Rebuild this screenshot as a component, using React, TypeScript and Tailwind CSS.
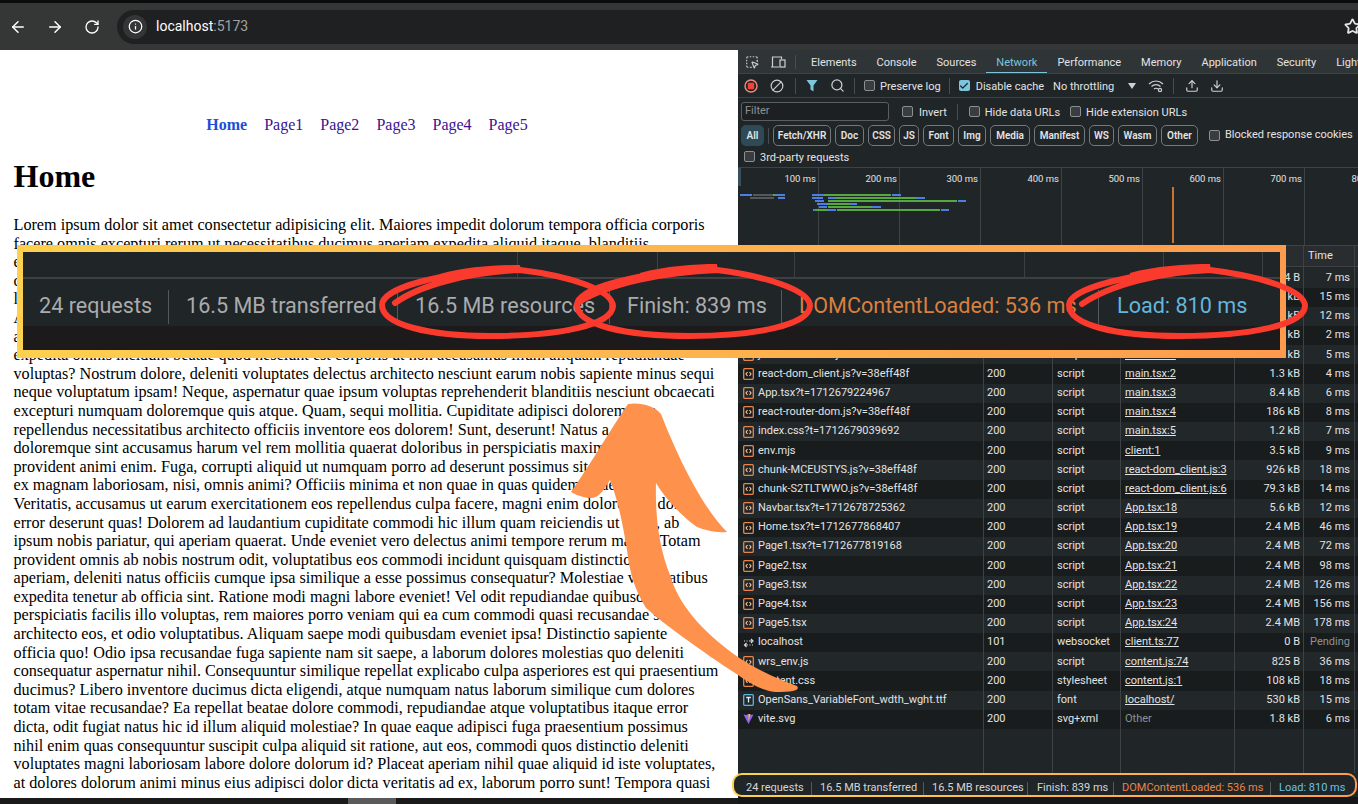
import { ArrowLeft, ArrowRight, RotateCw, Info, Star, Ban, Search, Upload, Download, Check, SquareDashedMousePointer } from 'lucide-react';

const lines = [
  'Lorem ipsum dolor sit amet consectetur adipisicing elit. Maiores impedit dolorum tempora officia corporis',
  'facere omnis excepturi rerum ut necessitatibus ducimus aperiam expedita aliquid itaque, blanditiis',
  'eveniet quibusdam nemo dolorum accusantium tempore laudantium consequatur sed ratione quia',
  'consectetur placeat dignissimos eaque vitae nostrum rerum soluta fugit harum magnam tenetur',
  'libero quas reprehenderit molestias dicta illum corrupti ipsam error ullam officia animi minima',
  'Assumenda voluptatem iure sapiente obcaecati facilis dolor ipsum debitis aperiam natus quod',
  'atque dolores maiores neque provident quisquam veritatis ducimus nisi esse repellat porro',
  'expedita omnis incidunt beatae quod nesciunt est corporis ut non accusamus illum aliquam repudiandae',
  'voluptas? Nostrum dolore, deleniti voluptates delectus architecto nesciunt earum nobis sapiente minus sequi',
  'neque voluptatum ipsam! Neque, aspernatur quae ipsum voluptas reprehenderit blanditiis nesciunt obcaecati',
  'excepturi numquam doloremque quis atque. Quam, sequi mollitia. Cupiditate adipisci dolorem ipsa',
  'repellendus necessitatibus architecto officiis inventore eos dolorem! Sunt, deserunt! Natus a quia',
  'doloremque sint accusamus harum vel rem mollitia quaerat doloribus in perspiciatis maxime nemo',
  'provident animi enim. Fuga, corrupti aliquid ut numquam porro ad deserunt possimus sit dolor amet',
  'ex magnam laboriosam, nisi, omnis animi? Officiis minima et non quae in quas quidem vitae atque',
  'Veritatis, accusamus ut earum exercitationem eos repellendus culpa facere, magni enim dolorem id dolor',
  'error deserunt quas! Dolorem ad laudantium cupiditate commodi hic illum quam reiciendis ut nulla, ab',
  'ipsum nobis pariatur, qui aperiam quaerat. Unde eveniet vero delectus animi tempore rerum magni. Totam',
  'provident omnis ab nobis nostrum odit, voluptatibus eos commodi incidunt quisquam distinctio nam',
  'aperiam, deleniti natus officiis cumque ipsa similique a esse possimus consequatur? Molestiae voluptatibus',
  'expedita tenetur ab officia sint. Ratione modi magni labore eveniet! Vel odit repudiandae quibusdam',
  'perspiciatis facilis illo voluptas, rem maiores porro veniam qui ea cum commodi quasi recusandae sit',
  'architecto eos, et odio voluptatibus. Aliquam saepe modi quibusdam eveniet ipsa! Distinctio sapiente',
  'officia quo! Odio ipsa recusandae fuga sapiente nam sit saepe, a laborum dolores molestias quo deleniti',
  'consequatur aspernatur nihil. Consequuntur similique repellat explicabo culpa asperiores est qui praesentium',
  'ducimus? Libero inventore ducimus dicta eligendi, atque numquam natus laborum similique cum dolores',
  'totam vitae recusandae? Ea repellat beatae dolore commodi, repudiandae atque voluptatibus itaque error',
  'dicta, odit fugiat natus hic id illum aliquid molestiae? In quae eaque adipisci fuga praesentium possimus',
  'nihil enim quas consequuntur suscipit culpa aliquid sit ratione, aut eos, commodi quos distinctio deleniti',
  'voluptates magni laboriosam labore dolore dolorum id? Placeat aperiam nihil quae aliquid id iste voluptates,',
  'at dolores dolorum animi minus eius adipisci dolor dicta veritatis ad ex, laborum porro sunt! Tempora quasi',
];

type Row = { name: string; status: string; type: string; init: string; size: string; time: string; kind?: string };

const rows: Row[] = [
  { name: 'localhost', status: '200', type: 'document', init: 'Other', size: '1.4 B', time: '7 ms', kind: 'doc' },
  { name: 'main.tsx', status: '200', type: 'script', init: 'localhost/:13', size: '2.1 kB', time: '15 ms' },
  { name: 'client', status: '200', type: 'script', init: 'localhost/:4', size: '170 kB', time: '12 ms' },
  { name: '@react-refresh', status: '200', type: 'script', init: 'localhost/:3', size: '104 kB', time: '2 ms' },
  { name: 'jsx-dev-runtime.js?v=38eff48f', status: '200', type: 'script', init: 'main.tsx:1', size: '1.1 kB', time: '5 ms' },
  { name: 'react-dom_client.js?v=38eff48f', status: '200', type: 'script', init: 'main.tsx:2', size: '1.3 kB', time: '4 ms' },
  { name: 'App.tsx?t=1712679224967', status: '200', type: 'script', init: 'main.tsx:3', size: '8.4 kB', time: '6 ms' },
  { name: 'react-router-dom.js?v=38eff48f', status: '200', type: 'script', init: 'main.tsx:4', size: '186 kB', time: '8 ms' },
  { name: 'index.css?t=1712679039692', status: '200', type: 'script', init: 'main.tsx:5', size: '1.2 kB', time: '7 ms' },
  { name: 'env.mjs', status: '200', type: 'script', init: 'client:1', size: '3.5 kB', time: '9 ms' },
  { name: 'chunk-MCEUSTYS.js?v=38eff48f', status: '200', type: 'script', init: 'react-dom_client.js:3', size: '926 kB', time: '18 ms' },
  { name: 'chunk-S2TLTWWO.js?v=38eff48f', status: '200', type: 'script', init: 'react-dom_client.js:6', size: '79.3 kB', time: '14 ms' },
  { name: 'Navbar.tsx?t=1712678725362', status: '200', type: 'script', init: 'App.tsx:18', size: '5.6 kB', time: '12 ms' },
  { name: 'Home.tsx?t=1712677868407', status: '200', type: 'script', init: 'App.tsx:19', size: '2.4 MB', time: '46 ms' },
  { name: 'Page1.tsx?t=1712677819168', status: '200', type: 'script', init: 'App.tsx:20', size: '2.4 MB', time: '72 ms' },
  { name: 'Page2.tsx', status: '200', type: 'script', init: 'App.tsx:21', size: '2.4 MB', time: '98 ms' },
  { name: 'Page3.tsx', status: '200', type: 'script', init: 'App.tsx:22', size: '2.4 MB', time: '126 ms' },
  { name: 'Page4.tsx', status: '200', type: 'script', init: 'App.tsx:23', size: '2.4 MB', time: '156 ms' },
  { name: 'Page5.tsx', status: '200', type: 'script', init: 'App.tsx:24', size: '2.4 MB', time: '178 ms' },
  { name: 'localhost', status: '101', type: 'websocket', init: 'client.ts:77', size: '0 B', time: 'Pending', kind: 'ws' },
  { name: 'wrs_env.js', status: '200', type: 'script', init: 'content.js:74', size: '825 B', time: '36 ms' },
  { name: 'content.css', status: '200', type: 'stylesheet', init: 'content.js:1', size: '108 kB', time: '18 ms' },
  { name: 'OpenSans_VariableFont_wdth_wght.ttf', status: '200', type: 'font', init: 'localhost/', size: '530 kB', time: '15 ms', kind: 'font' },
  { name: 'vite.svg', status: '200', type: 'svg+xml', init: 'Other', size: '1.8 kB', time: '6 ms', kind: 'vite' },
];

const tabs = ['Elements', 'Console', 'Sources', 'Network', 'Performance', 'Memory', 'Application', 'Security', 'Lighthouse'];
const pills = [
  { label: 'Fetch/XHR', cls: 'w-[58px]' },
  { label: 'Doc', cls: 'w-[29px]' },
  { label: 'CSS', cls: 'w-[27px]' },
  { label: 'JS', cls: 'w-[20px]' },
  { label: 'Font', cls: 'w-[31px]' },
  { label: 'Img', cls: 'w-[28px]' },
  { label: 'Media', cls: 'w-[40px]' },
  { label: 'Manifest', cls: 'w-[51px]' },
  { label: 'WS', cls: 'w-[25px]' },
  { label: 'Wasm', cls: 'w-[39px]' },
  { label: 'Other', cls: 'w-[37px]' },
];
const ticks = ['100 ms', '200 ms', '300 ms', '400 ms', '500 ms', '600 ms', '700 ms', '800 ms'];

function RowIcon({ kind }: { kind?: string }) {
  if (kind === 'ws')
    return (
      <svg width="11" height="12" viewBox="0 0 11 12" fill="none" stroke="#d8d8d8" strokeWidth="1.2">
        <path d="M1 4h1M3.500 4h1M6 4h3M8 2l2 2-2 2" />
        <path d="M10 8H9M7.500 8h-1M5 8H2M3.500 6 1.500 8l2 2" />
      </svg>
    );
  if (kind === 'font')
    return (
      <svg width="11" height="12" viewBox="0 0 11 12">
        <rect x="0.7" y="0.7" width="9.6" height="10.6" rx="1" fill="none" stroke="#5fb4e0" strokeWidth="1.3" />
        <path d="M3.2 3.500h4.600M5.500 3.500v5" stroke="#d9eef8" strokeWidth="1.3" fill="none" />
      </svg>
    );
  if (kind === 'vite')
    return (
      <svg width="11" height="12" viewBox="0 0 11 12">
        <path d="M0.5 1.5 L5.5 11 L10.5 1.5 L7.5 2 L5.5 1 L3.5 2 Z" fill="#8f63f5" />
        <path d="M5.5 1 L7.5 1 L5.5 8 Z" fill="#fcc72b" />
      </svg>
    );
  return (
    <svg width="11" height="12" viewBox="0 0 11 12">
      <rect x="0.7" y="0.7" width="9.6" height="10.6" rx="1" fill="none" stroke="#e8864a" strokeWidth="1.3" />
      <path d="M4.500 4L3 6l1.500 2M6.500 4L8 6 6.500 8" stroke="#f3cdb0" strokeWidth="1.1" fill="none" />
    </svg>
  );
}

function Box({ checked }: { checked?: boolean }) {
  return checked ? (
    <span className="flex h-[11px] w-[11px] items-center justify-center rounded-[2px] bg-[#7cc5dc]">
      <Check size={10} strokeWidth={3} className="text-[#1f2427]" />
    </span>
  ) : (
    <span className="block h-[11px] w-[11px] rounded-[2px] border border-[#8b8f92] bg-[#3a3d40]" />
  );
}

function Sep() {
  return <span className="block h-[16px] w-px bg-[#4a4d50]" />;
}

function Annotation() {
  return (
    <svg className="pointer-events-none absolute left-0 top-0 z-30" width="1358" height="804" viewBox="0 0 1358 804">
      <path
        d="M395 303C420 285 470 272 520 270C570 276 612 290 613 306C612 325 560 336 490 336C430 336 382 325 382 305C382 288 440 272 515 269"
        fill="none"
        stroke="#fb3a2e"
        strokeWidth="6"
        strokeLinecap="round"
      />
      <path d="M440 274C465 267 495 265 520 265L521 272C490 273 465 275 440 279Z" fill="#fb3a2e" />
      <path
        d="M579 302C610 283 665 272 717 270C765 276 810 290 810 306C809 325 755 336 690 336C625 336 577 325 577 305C577 288 640 272 712 269"
        fill="none"
        stroke="#fb3a2e"
        strokeWidth="6"
        strokeLinecap="round"
      />
      <path d="M640 273C665 266 695 264 717 264L718 272C690 273 665 275 640 278Z" fill="#fb3a2e" />
      <path
        d="M1082 304C1110 285 1160 272 1210 270C1260 276 1305 290 1305 306C1304 325 1250 336 1180 336C1115 336 1069 325 1069 305C1069 288 1135 272 1205 269"
        fill="none"
        stroke="#fb3a2e"
        strokeWidth="6"
        strokeLinecap="round"
      />
      <path d="M1130 273C1155 266 1185 264 1210 264L1211 272C1185 273 1155 275 1130 278Z" fill="#fb3a2e" />
      <path
        d="M628 404C640 402 655 406 661 414C675 450 700 505 727 532C715 533 705 530 697 527C680 515 665 498 656 483C655 520 660 550 670 575C680 610 710 637 738 657C755 669 780 680 797 686C800 690 795 692 775 692C760 690 748 682 738 675C700 650 665 625 646 608C635 590 630 575 627 550C623 525 618 500 610 480C605 488 600 497 592 498C585 498 578 496 571 492C590 465 610 430 628 404Z"
        fill="#fe914c"
      />
    </svg>
  );
}

export default function App() {
  return (
    <div className="relative h-[804px] w-[1358px] overflow-hidden bg-[#1f2124] font-['Roboto',sans-serif]">
      {/* chrome bar */}
      <div className="h-[50px] bg-[#353636]">
        <div className="h-[3px] bg-[#0b0b0b]" />
        <div className="flex h-[47px] items-center">
          <ArrowLeft size={18} className="ml-[9px] text-white" />
          <ArrowRight size={18} className="ml-[19px] text-white" />
          <RotateCw size={16} className="ml-[20px] text-white" />
          <div className="ml-[17px] flex h-[34px] flex-1 items-center rounded-l-full bg-[#1f2022] pl-[6px]">
            <span className="flex h-[24px] w-[24px] items-center justify-center rounded-full bg-[#333537]">
              <Info size={15} className="text-white" />
            </span>
            <span className="ml-[9px] text-[14px] text-white">
              localhost<span className="text-[#a0a2a5]">:5173</span>
            </span>
            <Star size={17} strokeWidth={2.5} className="ml-auto mr-[-3px] text-[#e3e3e3]" />
          </div>
        </div>
      </div>

      <div className="flex h-[754px]">
        {/* page */}
        <div className="w-[738px] shrink-0 bg-white font-['Liberation_Serif',serif] text-black">
          <div className="h-[748px] overflow-hidden">
            <nav className="flex justify-center gap-[17px] pr-[4px] pt-[65px] text-[16px] leading-[20px]">
              <a className="font-bold text-[#1d4fd8]">Home</a>
              {['Page1', 'Page2', 'Page3', 'Page4', 'Page5'].map((p) => (
                <a key={p} className="text-[#3b1290]">
                  {p}
                </a>
              ))}
            </nav>
            <h1 className="mt-[21px] pl-[13.5px] text-[32px] font-bold leading-[40px]">Home</h1>
            <div className="mt-[20px] pl-[13.5px] text-[16.2px] leading-[18.6px]">
              {lines.map((l, i) => (
                <div key={i} className="whitespace-nowrap">
                  {l}
                </div>
              ))}
            </div>
          </div>
          <div className="flex h-[6px] bg-[#1a1a1a] pl-[348px]">
            <div className="h-full w-[48px] bg-[#5a5a5a]" />
          </div>
        </div>

        {/* devtools */}
        <div className="flex w-[620px] shrink-0 flex-col bg-[#202528] text-[11px] text-[#e3e3e3]">
          <div className="flex h-[24px] items-center overflow-hidden border-b border-[#3f4245] bg-[#2f3437]">
            <SquareDashedMousePointer size={14} className="ml-[7px] shrink-0 text-[#d0d0d0]" />
            <svg className="ml-[11px] shrink-0" width="16" height="14" viewBox="0 0 16 14" fill="none" stroke="#d0d0d0" strokeWidth="1.2">
              <path d="M1 12h8M2.500 12V2h9v2" />
              <rect x="10" y="5" width="5" height="7" />
            </svg>
            <span className="ml-[9px] h-[14px] w-px shrink-0 bg-[#4a4d50]" />
            <div className="ml-[5px] flex">
              {tabs.map((t) => (
                <span
                  key={t}
                  className={
                    t === 'Network'
                      ? 'flex h-[24px] items-center whitespace-nowrap border-b-2 border-[#7cc5dc] px-[10px] pt-[5px] text-[#7cc5dc]'
                      : 'flex h-[24px] items-center whitespace-nowrap px-[10px] pt-[3px]'
                  }
                >
                  {t}
                </span>
              ))}
            </div>
          </div>

          <div className="flex h-[24px] items-center border-b border-[#3f4245]">
            <svg className="ml-[6px]" width="14" height="14" viewBox="0 0 14 14">
              <circle cx="7" cy="7" r="6" fill="none" stroke="#f28b82" strokeWidth="1.4" />
              <rect x="3.800" y="3.800" width="6.400" height="6.400" rx="1.200" fill="#f44336" />
            </svg>
            <Ban size={14} className="ml-[12px] -scale-x-100 text-[#d0d0d0]" />
            <span className="ml-[11px]"><Sep /></span>
            <svg className="ml-[10px]" width="12" height="13" viewBox="0 0 12 13">
              <path d="M0.5 1h11L7.500 6.500V12.500L4.500 10.500V6.500Z" fill="#7cc5dc" />
            </svg>
            <Search size={15} className="ml-[12px] text-[#d0d0d0]" />
            <span className="ml-[9px]"><Sep /></span>
            <span className="ml-[9px]"><Box /></span>
            <span className="ml-[5px] pt-[3px]">Preserve log</span>
            <span className="ml-[8px]"><Sep /></span>
            <span className="ml-[9px]"><Box checked /></span>
            <span className="ml-[6px] pt-[3px]">Disable cache</span>
            <span className="ml-[9px] pt-[3px]">No throttling</span>
            <svg className="ml-[14px]" width="8" height="6" viewBox="0 0 8 6"><path d="M0 0h8L4 6Z" fill="#d0d0d0" /></svg>
            <svg className="ml-[12px]" width="16" height="14" viewBox="0 0 16 14" fill="none" stroke="#d0d0d0" strokeWidth="1.2">
              <path d="M1 5c4-4 10-4 14 0M3.500 7.500c2.500-2.500 6.500-2.500 9 0M6 10c1-1 3-1 4 0" />
              <circle cx="12" cy="11" r="1.600" />
            </svg>
            <span className="ml-[9px]"><Sep /></span>
            <Upload size={14} className="ml-[11px] text-[#d0d0d0]" />
            <Download size={14} className="ml-[11px] text-[#d0d0d0]" />
          </div>

          <div className="flex h-[27px] items-center pl-[3px]">
            <span className="flex h-[19px] w-[148px] items-center rounded-[3px] border border-[#5b5e61] bg-[#1d2023] pl-[3px] text-[#8e9194]">Filter</span>
            <span className="ml-[13px]"><Box /></span>
            <span className="ml-[6px] pt-[3px]">Invert</span>
            <span className="ml-[10px]"><Sep /></span>
            <span className="ml-[11px]"><Box /></span>
            <span className="ml-[5px] pt-[3px]">Hide data URLs</span>
            <span className="ml-[10px]"><Box /></span>
            <span className="ml-[5px] pt-[3px]">Hide extension URLs</span>
          </div>

          <div className="flex h-[21px] items-center pl-[3px] text-[10px] font-semibold">
            <span className="flex h-[21px] w-[23px] items-center justify-center rounded-[5px] bg-[#2e4a57]">All</span>
            <span className="ml-[4px] h-[16px] w-px bg-[#4a4d50]" />
            <div className="ml-[4px] flex gap-[4px]">
              {pills.map((p) => (
                <span key={p.label} className={`flex h-[21px] items-center justify-center whitespace-nowrap rounded-[5px] border border-[#74787b] ${p.cls}`}>
                  {p.label}
                </span>
              ))}
            </div>
            <span className="ml-[11px]"><Box /></span>
            <span className="ml-[5px] whitespace-nowrap text-[11px] font-normal">Blocked response cookies</span>
          </div>

          <div className="flex h-[22px] items-center border-b border-[#3f4245] pl-[6px]">
            <Box />
            <span className="ml-[5px] pt-[3px]">3rd-party requests</span>
          </div>

          {/* overview */}
          <div className="relative flex h-[78px] border-b border-[#3f4245]">
            {ticks.map((t) => (
              <div key={t} className="flex h-full w-[81px] shrink-0 justify-end border-r border-[#3f4245] pr-[2px] pt-[4px] text-[9.5px] leading-[14px]">
                {t}
              </div>
            ))}
            <svg className="absolute left-0 top-0" width="620" height="76" viewBox="0 0 620 76">
              <g fill="#4d7fe0">
                <rect x="2" y="26" width="12" height="2" /><rect x="37" y="26" width="10" height="2" />
                <rect x="40" y="29" width="7" height="2" /><rect x="74" y="26" width="12" height="2" />
                <rect x="154" y="26" width="9" height="2" /><rect x="74" y="29" width="11" height="2" />
                <rect x="90" y="29" width="8" height="2" /><rect x="178" y="29" width="9" height="2" />
                <rect x="77" y="32" width="9" height="2" /><rect x="220" y="32" width="8" height="2" />
                <rect x="79" y="35" width="10" height="2" /><rect x="111" y="35" width="8" height="2" />
                <rect x="81" y="38" width="8" height="2" /><rect x="134" y="38" width="9" height="2" />
                <rect x="75" y="41" width="3" height="2" /><rect x="90" y="41" width="8" height="2" />
                <rect x="203" y="41" width="8" height="2" />
              </g>
              <g fill="#57a843">
                <rect x="86" y="26" width="67" height="2" /><rect x="98" y="29" width="80" height="2" />
                <rect x="90" y="32" width="129" height="2" /><rect x="89" y="35" width="22" height="2" />
                <rect x="90" y="38" width="44" height="2" /><rect x="78" y="41" width="12" height="2" />
                <rect x="99" y="41" width="103" height="2" /><rect x="35" y="26" width="2" height="2" />
              </g>
              <g fill="#55585b">
                <rect x="15" y="26" width="20" height="2" /><rect x="12" y="29" width="16" height="2" />
                <rect x="28" y="29" width="8" height="2" />
              </g>
              <rect x="434" y="19" width="2" height="56" fill="#c9752f" />
              <rect x="0" y="0" width="3" height="18" fill="#37505c" />
            </svg>
          </div>

          {/* table */}
          <div className="flex h-[21px] border-b border-[#3f4245] bg-[#2a2d30] leading-[19px]">
            <div className="w-[246px] border-r border-[#3f4245] pl-[4px]">Name</div>
            <div className="w-[69px] border-r border-[#3f4245] pl-[4px]">Status</div>
            <div className="w-[68px] border-r border-[#3f4245] pl-[4px]">Type</div>
            <div className="w-[114px] border-r border-[#3f4245] pl-[4px]">Initiator</div>
            <div className="w-[69px] border-r border-[#3f4245] pl-[4px]">Size</div>
            <div className="w-[51px] border-r border-[#3f4245] pl-[4px]">Time</div>
          </div>
          <div className="relative min-h-0 flex-1 overflow-hidden pt-[1.5px]">
            <div className="pointer-events-none absolute inset-0 flex">
              <div className="w-[246px] border-r border-[#3f4245]" />
              <div className="w-[69px] border-r border-[#3f4245]" />
              <div className="w-[68px] border-r border-[#3f4245]" />
              <div className="w-[114px] border-r border-[#3f4245]" />
              <div className="w-[69px] border-r border-[#3f4245]" />
              <div className="w-[51px] border-r border-[#3f4245]" />
            </div>
            {rows.map((r, i) => (
              <div key={i} className={i % 2 === 1 ? 'flex h-[19.2px] items-center bg-[#191c1d]' : 'flex h-[19.2px] items-center bg-[#22272a]'}>
                <div className="flex w-[246px] items-center pl-[5px]">
                  <RowIcon kind={r.kind} />
                  <span className="ml-[4px] whitespace-nowrap">{r.name}</span>
                </div>
                <div className="w-[69px] pl-[3px]">{r.status}</div>
                <div className="w-[68px] pl-[4px]">{r.type}</div>
                <div className={r.init === 'Other' ? 'w-[114px] pl-[4px] text-[#8e9194]' : 'w-[114px] pl-[4px] underline'}>{r.init}</div>
                <div className="w-[65px] text-right">{r.size}</div>
                <div className={r.time === 'Pending' ? 'w-[50px] text-right text-[#8e9194]' : 'w-[50px] text-right'}>{r.time}</div>
              </div>
            ))}
          </div>

          <div className="h-[24px]" />
          <div className="h-[7px] bg-[#151617]" />
        </div>
      </div>

      {/* bottom status, outlined */}
      <div className="absolute left-[732px] top-[773px] z-20 h-[24px] w-[625px] rounded-[10px] bg-gradient-to-r from-[#fcd24f] to-[#fd9c4e] p-[2px]">
        <div className="flex h-full items-center rounded-[8px] bg-[#202528] pt-[6px] text-[11px] text-[#d6d6d6]">
          <span className="ml-[12px] w-[65px]">24 requests</span>
          <span className="h-[13px] w-px bg-[#55585b]" />
          <span className="ml-[8px] w-[103px]">16.5 MB transferred</span>
          <span className="h-[13px] w-px bg-[#55585b]" />
          <span className="ml-[8px] w-[95px]">16.5 MB resources</span>
          <span className="h-[13px] w-px bg-[#55585b]" />
          <span className="ml-[9px] w-[76px]">Finish: 839 ms</span>
          <span className="h-[13px] w-px bg-[#55585b]" />
          <span className="ml-[8px] w-[148px] text-[#e8864a]">DOMContentLoaded: 536 ms</span>
          <span className="h-[13px] w-px bg-[#55585b]" />
          <span className="ml-[8px] text-[#6cc0e6]">Load: 810 ms</span>
        </div>
      </div>

      {/* zoomed status bar callout */}
      <div className="absolute left-[17px] top-[245px] z-20 h-[113px] w-[1269px] bg-gradient-to-r from-[#fdd04e] to-[#fd9a4d] pb-[8px] pl-[6px] pr-[6px] pt-[7px]">
        <div className="flex h-full flex-col bg-[#202528]">
          <div className="flex h-[27px] border-b-2 border-[#3c4043]">
            <div className="ml-[494px] w-px bg-[#3c4043]" />
            <div className="ml-[139px] w-px bg-[#3c4043]" />
            <div className="ml-[136px] w-px bg-[#3c4043]" />
            <div className="ml-[229px] w-px bg-[#3c4043]" />
            <div className="ml-[138px] w-px bg-[#3c4043]" />
            <div className="ml-[98px] w-px bg-[#3c4043]" />
          </div>
          <div className="flex flex-1 items-center pt-[8px] text-[21.6px] text-[#a9abad]">
            <span className="ml-[16px] w-[129px] whitespace-nowrap">24 requests</span>
            <span className="h-[34px] w-px bg-[#55585b]" />
            <span className="ml-[17px] w-[211px] whitespace-nowrap">16.5 MB transferred</span>
            <span className="h-[34px] w-px bg-[#55585b]" />
            <span className="ml-[17px] w-[194px] whitespace-nowrap">16.5 MB resources</span>
            <span className="h-[34px] w-px bg-[#55585b]" />
            <span className="ml-[17px] w-[154px] whitespace-nowrap">Finish: 839 ms</span>
            <span className="h-[34px] w-px bg-[#55585b]" />
            <span className="ml-[17px] w-[299px] whitespace-nowrap text-[#d9803f]">DOMContentLoaded: 536 ms</span>
            <span className="h-[34px] w-px bg-[#55585b]" />
            <span className="ml-[18px] whitespace-nowrap text-[#63b6dc]">Load: 810 ms</span>
          </div>
          <div className="h-[24px] bg-[#1c1a1a]" />
        </div>
      </div>

      <Annotation />
    </div>
  );
}
